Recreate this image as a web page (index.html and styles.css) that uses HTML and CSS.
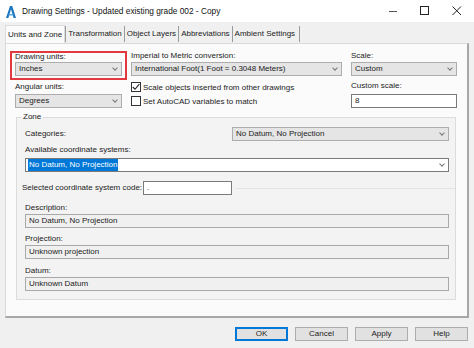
FILE: index.html
```html
<!DOCTYPE html>
<html>
<head>
<meta charset="utf-8">
<link rel="stylesheet" href="styles.css">
</head>
<body>
<div class="window">
  <div class="titlebar">
    <svg class="app-icon" width="10" height="12" viewBox="0 0 10 12">
      <path d="M4 0 L6.2 0 L10 12 L7.6 12 L5 3.2 L2.4 12 L0 12 Z" fill="#1b76c0"/>
      <path d="M2.8 8 L7.2 8 L7.6 9.6 L2.4 9.6 Z" fill="#52a9e6"/>
    </svg>
    <span class="title">Drawing Settings - Updated existing grade 002 - Copy</span>
    <div class="controls">
      <svg width="10" height="10" viewBox="0 0 10 10"><path d="M1 5.5 H9" stroke="#555" stroke-width="1"/></svg>
      <svg width="10" height="10" viewBox="0 0 10 10"><rect x="0.5" y="0.5" width="8" height="8" fill="none" stroke="#222" stroke-width="1"/></svg>
      <svg width="10" height="10" viewBox="0 0 10 10"><path d="M0.5 0.5 L9 9 M9 0.5 L0.5 9" stroke="#222" stroke-width="1"/></svg>
    </div>
  </div>

  <div class="tabs">
    <div class="tab active">Units and Zone</div>
    <div class="tab">Transformation</div>
    <div class="tab">Object Layers</div>
    <div class="tab">Abbreviations</div>
    <div class="tab last">Ambient Settings</div>
  </div>

  <div class="panel">
    <div class="top">
      <div class="col col1">
        <div class="label">Drawing units:</div>
        <div class="combo"><span>Inches</span><i class="chev"></i></div>
        <div class="label gap6">Angular units:</div>
        <div class="combo gap2"><span>Degrees</span><i class="chev"></i></div>
        <div class="highlight"></div>
      </div>
      <div class="col col2">
        <div class="label">Imperial to Metric conversion:</div>
        <div class="combo"><span>International Foot(1 Foot = 0.3048 Meters)</span><i class="chev"></i></div>
        <div class="check gap6">
          <span class="box">
            <svg width="10" height="10" viewBox="0 0 10 10"><path d="M1.8 5 L4 7.3 L8.3 2.2" fill="none" stroke="#222" stroke-width="1.1"/></svg>
          </span>
          <span>Scale objects inserted from other drawings</span>
        </div>
        <div class="check gap4">
          <span class="box"></span>
          <span>Set AutoCAD variables to match</span>
        </div>
      </div>
      <div class="col col3">
        <div class="label">Scale:</div>
        <div class="combo"><span>Custom</span><i class="chev"></i></div>
        <div class="label gap5">Custom scale:</div>
        <div class="input gap3"><span>8</span></div>
      </div>
    </div>

    <fieldset class="zone">
      <legend>Zone</legend>
      <div class="row cat">
        <div class="label">Categories:</div>
        <div class="combo wide"><span>No Datum, No Projection</span><i class="chev"></i></div>
      </div>
      <div class="label gap4">Available coordinate systems:</div>
      <div class="input combo-white gap3"><span class="sel">No Datum, No Projection</span><i class="chev"></i></div>
      <div class="row code">
        <div class="label">Selected coordinate system code:</div>
        <div class="input code-input"><span>.</span></div>
        <div class="sep"></div>
      </div>
      <div class="label gap8">Description:</div>
      <div class="field gap1">No Datum, No Projection</div>
      <div class="label gap6">Projection:</div>
      <div class="field gap1">Unknown projection</div>
      <div class="label gap7">Datum:</div>
      <div class="field gap1">Unknown Datum</div>
    </fieldset>
  </div>

  <div class="buttons">
    <div class="btn default">OK</div>
    <div class="btn">Cancel</div>
    <div class="btn">Apply</div>
    <div class="btn">Help</div>
  </div>
</div>
</body>
</html>
```

FILE: styles.css
```css
* { box-sizing: border-box; }
html, body { margin: 0; padding: 0; }
body {
  width: 474px;
  height: 348px;
  overflow: hidden;
  background: #f0f0f0;
  font-family: "Liberation Sans", Arial, sans-serif;
  font-size: 8px;
  color: #222;
}
.window { width: 474px; height: 348px; position: relative; }

.titlebar {
  height: 22px;
  background: #ffffff;
  display: flex;
  align-items: center;
}
.app-icon { margin-left: 6px; margin-top: 1px; }
.title { margin-left: 6px; font-size: 8.3px; color: #111; }
.controls {
  margin-left: auto;
  display: flex;
  gap: 22px;
  padding-right: 12px;
  align-items: center;
}

.tabs {
  height: 21px;
  display: flex;
  align-items: flex-end;
  padding-left: 5px;
}
.tab {
  height: 16px;
  line-height: 15px;
  padding: 0 2px 0 2px;
  border-left: 1px solid #9a9a9a;
  margin-bottom: 1px;
  white-space: nowrap;
}
.tab.active {
  height: 18px;
  line-height: 17px;
  background: #fbfbfb;
  border: 1px solid #dcdcdc;
  border-bottom: none;
  padding: 0 2px;
  margin-bottom: 0;
}
.tab.last { border-right: 1px solid #9a9a9a; padding-right: 4px; }

.panel {
  margin-left: 5px;
  width: 464px;
  height: 275px;
  background: #fbfbfb;
  border: 1px solid #dadada;
  border-right: 2px solid #a7a7a7;
  border-bottom: 2px solid #a7a7a7;
}

.top {
  display: flex;
  gap: 9px;
  padding: 7px 0 0 9px;
}
.col { display: flex; flex-direction: column; position: relative; }
.col1 { width: 107px; }
.col2 { width: 211px; }
.col3 { width: 106px; }

.label { height: 10px; line-height: 10px; white-space: nowrap; }
.col1 > .label:first-child { line-height: 11px; }
.combo {
  margin-top: 1px;
  height: 14px;
  background: #e5e5e5;
  border: 1px solid #adadad;
  display: flex;
  align-items: center;
  padding-left: 3px;
  white-space: nowrap;
  overflow: hidden;
}
.combo span, .input span { flex: 1; line-height: 12px; }
.chev {
  flex: 0 0 auto;
  width: 4px;
  height: 4px;
  border-right: 1px solid #777;
  border-bottom: 1px solid #777;
  transform: rotate(45deg);
  margin: 0 4px 2px 0;
}
.input {
  height: 14px;
  background: #ffffff;
  border: 1px solid #7a7a7a;
  display: flex;
  align-items: center;
  padding-left: 3px;
}
.gap1 { margin-top: 1px; }
.gap2 { margin-top: 2px; }
.gap3 { margin-top: 3px; }
.gap4 { margin-top: 4px; }
.gap5 { margin-top: 5px; }
.gap6 { margin-top: 6px; }
.gap7 { margin-top: 7px; }
.gap8 { margin-top: 8px; }

.highlight {
  position: absolute;
  left: -5px;
  top: 0px;
  width: 117px;
  height: 29px;
  border: 2px solid #e2393f;
  pointer-events: none;
}

.check { display: flex; align-items: center; height: 10px; gap: 2px; white-space: nowrap; }
.box {
  width: 10px; height: 10px;
  border: 1px solid #333;
  background: #fff;
  display: flex;
  align-items: center;
  justify-content: center;
}
.box svg { display: block; margin: -1px; }

.zone {
  margin: 4px 0 0 10px;
  width: 440px;
  height: 188px;
  padding: 0 6px 0 8px;
  border: 1px solid #dcdcdc;
  background: #f3f3f3;
}
.zone legend {
  padding: 0 2px;
  margin-left: -4px;
  height: 10px;
  line-height: 10px;
  font-size: 8px;
}
.row { display: flex; align-items: center; }
.cat { margin-top: 5px; height: 14px; }
.cat .combo { margin-top: 0; margin-left: auto; width: 217px; }
.combo-white { border-color: #7a7a7a; }
.combo-white .sel {
  flex: 0 0 auto;
  background: #0078d7;
  color: #fff;
  padding: 0 1px;
  margin-left: -1px;
  margin-right: auto;
}
.code { margin-top: 9px; margin-left: -3px; height: 14px; }
.code .label { width: 120px; }
.code-input { width: 89px; margin-left: 1px; }
.sep {
  flex: 1;
  height: 1px;
  background: #e4e4e4;
  margin-left: 4px;
  margin-right: -6px;
}
.field {
  height: 14px;
  line-height: 12px;
  background: #f0f0f0;
  border: 1px solid #a9a9a9;
  padding-left: 3px;
}

.buttons {
  display: flex;
  justify-content: flex-end;
  gap: 7px;
  padding: 9px 6px 0 0;
}
.btn {
  width: 53px;
  height: 14px;
  line-height: 12px;
  text-align: center;
  background: #e1e1e1;
  border: 1px solid #adadad;
}
.btn.default { border: 1px solid #0078d7; box-shadow: inset 0 0 0 1px #0078d7; }
```
